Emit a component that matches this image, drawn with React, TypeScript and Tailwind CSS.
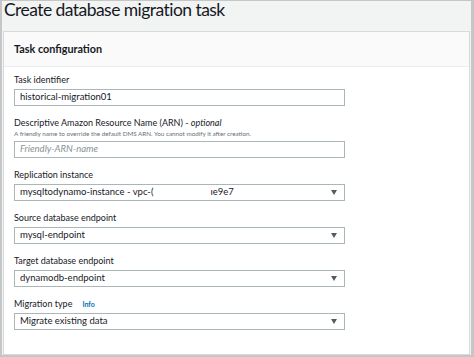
import React from "react";

const Caret = () => (
  <svg width="6" height="5" viewBox="0 0 6 5" className="shrink-0">
    <path d="M0 0 H6 L3 5 Z" fill="#545b64" />
  </svg>
);

type FieldProps = {
  label: React.ReactNode;
  hint?: string;
  children: React.ReactNode;
};

const Field = ({ label, hint, children }: FieldProps) => (
  <div className="flex flex-col">
    <div className="h-[12px] leading-[12px] text-[9px] text-[#16191f]">{label}</div>
    {hint ? (
      <div className="h-[10px] leading-[10px] text-[6.3px] text-[#687078] mb-[2px]">{hint}</div>
    ) : (
      <div className="h-[3px]" />
    )}
    {children}
  </div>
);

const Input = ({ value, placeholder }: { value?: string; placeholder?: string }) => (
  <div className="w-[331px] h-[17px] border border-[#aab7b8] bg-white flex items-center px-[5px] text-[9.5px]">
    {value ? (
      <span className="text-[#16191f]">{value}</span>
    ) : (
      <span className="italic text-[#879596]">{placeholder}</span>
    )}
  </div>
);

const Select = ({ children }: { children: React.ReactNode }) => (
  <div className="w-[331px] h-[17px] border border-[#aab7b8] bg-white flex items-center justify-between pl-[5px] pr-[7px] text-[9.5px] text-[#16191f]">
    <div className="flex items-center">{children}</div>
    <Caret />
  </div>
);

export default function App() {
  return (
    <div
      className="w-[474px] h-[357px] overflow-hidden bg-[#f2f3f3] border-t border-l-2 border-r-[3px] border-b-2 border-[#c6c6c6] flex flex-col"
      style={{ fontFamily: "Lato, 'Open Sans', sans-serif" }}
    >
      <h1 className="h-[31px] pl-[2px] text-[17.5px] leading-[19px] tracking-[-0.55px] text-[#16191f] -mt-[1px]">
        Create database migration task
      </h1>

      <div className="ml-[1px] mr-[1px] flex-1 bg-white border border-[#d5dbdb] flex flex-col">
        <div className="h-[35px] bg-[#fafafa] border-b border-[#eaeded] flex items-center px-[10px]">
          <span className="text-[10.8px] font-bold text-[#16191f]">Task configuration</span>
        </div>

        <div className="pt-[7px] pl-[10px] flex flex-col gap-[11px]">
          <Field label="Task identifier">
            <Input value="historical-migration01" />
          </Field>

          <Field
            label={
              <>
                Descriptive Amazon Resource Name (ARN) - <span className="italic">optional</span>
              </>
            }
            hint="A friendly name to override the default DMS ARN. You cannot modify it after creation."
          >
            <Input placeholder="Friendly-ARN-name" />
          </Field>

          <Field label="Replication instance">
            <Select>
              <span>mysqltodynamo-instance - vpc-(</span>
              <span className="w-[57px]" />
              <span>ıe9e7</span>
            </Select>
          </Field>

          <Field label="Source database endpoint">
            <Select>mysql-endpoint</Select>
          </Field>

          <Field label="Target database endpoint">
            <Select>dynamodb-endpoint</Select>
          </Field>

          <Field
            label={
              <span className="flex items-center gap-[10px]">
                Migration type
                <span className="text-[7px] font-bold text-[#0073bb]">Info</span>
              </span>
            }
          >
            <Select>Migrate existing data</Select>
          </Field>
        </div>
      </div>
    </div>
  );
}
